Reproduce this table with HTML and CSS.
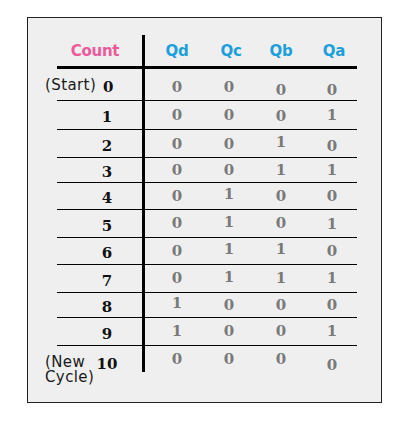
FILE: index.html
```html
<!DOCTYPE html>
<html>
<head>
<meta charset="utf-8">
<link rel="stylesheet" href="styles.css">
</head>
<body>
<div class="box">
  <div class="table">
    <div class="row head h31">
      <div class="count"><span class="count-title">Count</span></div>
      <div class="bits">
        <span class="q">Qd</span><span class="q qc">Qc</span><span class="q">Qb</span><span class="q qa">Qa</span>
      </div>
    </div>
    <div class="row h31">
      <div class="count"><span class="label nowrap">(Start)</span><span class="num">0</span></div>
      <div class="bits"><span class="b dn3">0</span><span class="b dn3">0</span><span class="b dn6">0</span><span class="b dn6">0</span></div>
    </div>
    <div class="row h28">
      <div class="count"><span class="label"></span><span class="num">1</span></div>
      <div class="bits"><span class="b">0</span><span class="b">0</span><span class="b dn1">0</span><span class="b">1</span></div>
    </div>
    <div class="row h27">
      <div class="count"><span class="label"></span><span class="num">2</span></div>
      <div class="bits"><span class="b dn1">0</span><span class="b dn1">0</span><span class="b up1">1</span><span class="b dn3">0</span></div>
    </div>
    <div class="row h24">
      <div class="count"><span class="label"></span><span class="num">3</span></div>
      <div class="bits"><span class="b">0</span><span class="b">0</span><span class="b">1</span><span class="b">1</span></div>
    </div>
    <div class="row h26">
      <div class="count"><span class="label"></span><span class="num">4</span></div>
      <div class="bits"><span class="b">0</span><span class="b up1">1</span><span class="b">0</span><span class="b">0</span></div>
    </div>
    <div class="row h27">
      <div class="count"><span class="label"></span><span class="num">5</span></div>
      <div class="bits"><span class="b">0</span><span class="b up1">1</span><span class="b">0</span><span class="b dn1">1</span></div>
    </div>
    <div class="row h26">
      <div class="count"><span class="label"></span><span class="num">6</span></div>
      <div class="bits"><span class="b">0</span><span class="b up1">1</span><span class="b up1">1</span><span class="b">0</span></div>
    </div>
    <div class="row h27">
      <div class="count"><span class="label"></span><span class="num">7</span></div>
      <div class="bits"><span class="b">0</span><span class="b up1">1</span><span class="b">1</span><span class="b">1</span></div>
    </div>
    <div class="row h24">
      <div class="count"><span class="label"></span><span class="num">8</span></div>
      <div class="bits"><span class="b up1">1</span><span class="b">0</span><span class="b">0</span><span class="b">0</span></div>
    </div>
    <div class="row h27">
      <div class="count"><span class="label"></span><span class="num">9</span></div>
      <div class="bits"><span class="b">1</span><span class="b">0</span><span class="b">0</span><span class="b">1</span></div>
    </div>
    <div class="row last h26">
      <div class="count"><span class="label top">(New Cycle)</span><span class="num top">10</span></div>
      <div class="bits top-bits"><span class="b">0</span><span class="b">0</span><span class="b">0</span><span class="b dn3">0</span></div>
    </div>
  </div>
</div>
</body>
</html>
```

FILE: styles.css
```css
html, body {
  margin: 0;
  padding: 0;
  background: #ffffff;
}

body {
  width: 408px;
  height: 426px;
  overflow: hidden;
}

.box {
  box-sizing: border-box;
  margin: 17px 0 0 27px;
  width: 355px;
  height: 386px;
  border: 1px solid #222222;
  background: #efefef;
  padding: 17px 0 0 29px;
}

.table {
  display: flex;
  flex-direction: column;
  width: 300px;
}

.row {
  display: flex;
  box-sizing: content-box;
  border-bottom: 1px solid #000000;
}

.row.head {
  border-bottom: 3px solid #000000;
}

.row.last {
  border-bottom: none;
}

.h24 { height: 24px; }
.h26 { height: 26px; }
.h27 { height: 27px; }
.h28 { height: 28px; }
.h31 { height: 31px; }

.count {
  flex: none;
  margin-left: -12px;
  border-right: 3px solid #000000;
  display: grid;
  grid-template-columns: 1fr 24px;
  padding-right: 23px;
  box-sizing: content-box;
  width: 74px;
  align-items: center;
}

.head .count {
  display: flex;
  justify-content: center;
  padding-right: 0;
  padding-left: 3px;
  width: 94px;
}

.count-title {
  font-family: "DejaVu Sans", Verdana, sans-serif;
  font-weight: bold;
  font-size: 15px;
  letter-spacing: -0.3px;
  color: #ec5a9c;
}

.label {
  font-family: "DejaVu Sans", Verdana, sans-serif;
  font-size: 15px;
  line-height: 15px;
  letter-spacing: 0.4px;
  color: #1a1a1a;
  padding-top: 1px;
}

.nowrap {
  white-space: nowrap;
}

.label.top {
  align-self: start;
  padding-top: 9px;
}

.num {
  font-family: "DejaVu Serif", Georgia, serif;
  font-weight: bold;
  font-size: 15px;
  line-height: 15px;
  color: #111111;
  text-align: center;
  padding-top: 5px;
}

.num.top {
  align-self: start;
  padding-top: 11px;
}

.bits {
  flex: none;
  width: 206px;
  padding-left: 6px;
  display: grid;
  grid-template-columns: 52px 52px 52px 50px;
  align-items: center;
  justify-items: center;
}

.top-bits {
  align-items: start;
  padding-top: 6px;
  box-sizing: border-box;
  width: 212px;
}

.q {
  font-family: "DejaVu Sans", Verdana, sans-serif;
  font-weight: bold;
  font-size: 15px;
  letter-spacing: -0.3px;
  color: #1c9fdb;
}

.qc, .qa {
  padding-left: 4px;
}

.b {
  font-family: "DejaVu Serif", Georgia, serif;
  font-weight: bold;
  font-size: 15px;
  line-height: 15px;
  color: #7a7a7a;
}

.dn1 { padding-top: 2px; }
.dn3 { padding-top: 6px; }
.dn6 { padding-top: 12px; }
.up1 { padding-bottom: 3px; }
```
